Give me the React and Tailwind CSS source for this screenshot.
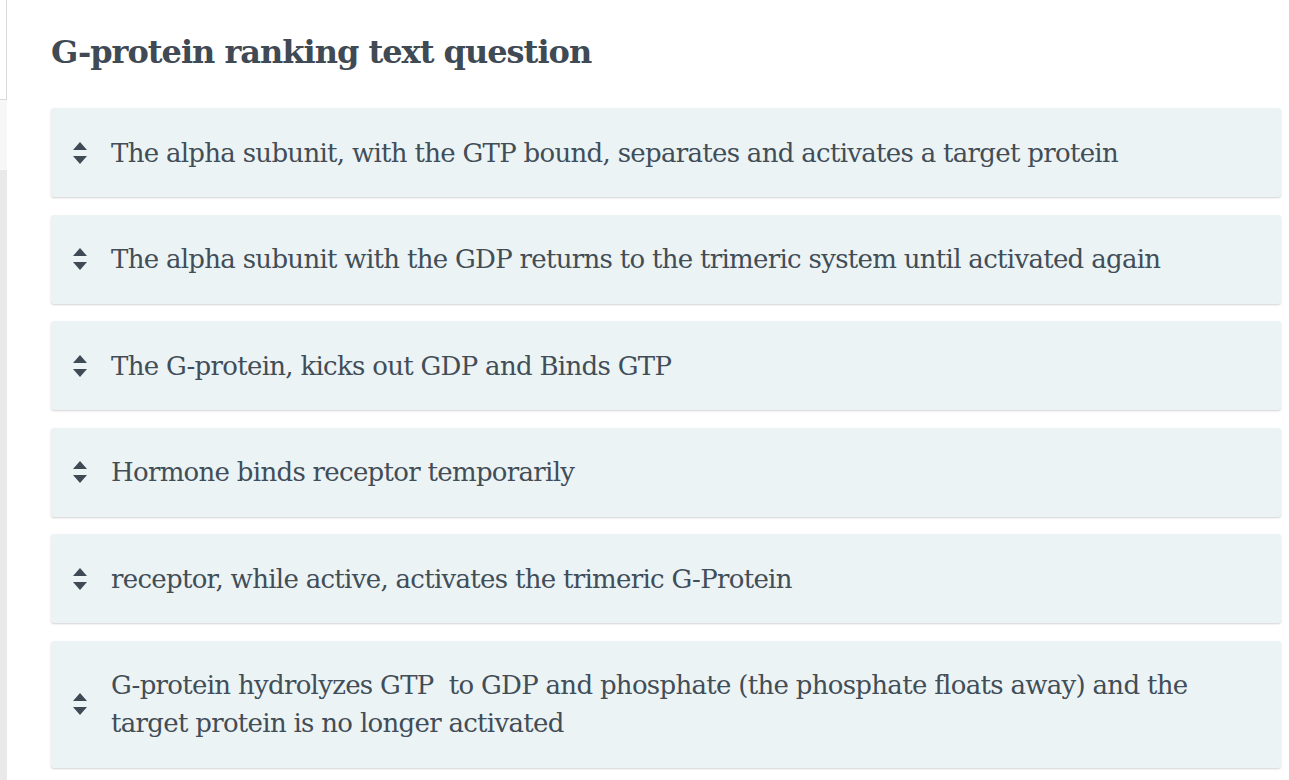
import React from 'react';

const items = [
    'The alpha subunit, with the GTP bound, separates and activates a target protein',
    'The alpha subunit with the GDP returns to the trimeric system until activated again',
    'The G-protein, kicks out GDP and Binds GTP',
    'Hormone binds receptor temporarily',
    'receptor, while active, activates the trimeric G-Protein',
    'G-protein hydrolyzes GTP\u00a0 to GDP and phosphate (the phosphate floats away) and the target protein is no longer activated',
];

function SortIcon() {
    return (
        <svg width="14" height="22" viewBox="0 0 14 22" className="shrink-0 text-[#3e4a54]">
            <path d="M0 8 L7 0 L14 8 Z" fill="currentColor" />
            <path d="M0 14 L14 14 L7 22 Z" fill="currentColor" />
        </svg>
    );
}

function RankItem({ text }) {
    return (
        <div className="flex items-center gap-[24px] bg-[#ecf3f5] rounded-[3px] shadow-[0_1px_2px_rgba(0,0,0,0.18)] pl-[22px] pr-[60px] py-[25.5px]">
            <SortIcon />
            <div className="text-[26px] leading-[38px] tracking-[-0.7px] text-[#414d57]">{text}</div>
        </div>
    );
}

export default function App() {
    return (
        <div className="flex w-[1289px] h-[780px] bg-white overflow-hidden" style={{ fontFamily: '"DejaVu Serif", "Liberation Serif", serif' }}>
            <div className="w-[7px] shrink-0 flex flex-col">
                <div className="h-[100px] bg-white border-r border-b border-[#d9d9d9]"></div>
                <div className="h-[70px] bg-[#f7f7f7]"></div>
                <div className="flex-1 bg-[#e9e9e9]"></div>
            </div>
            <div className="flex-1 pl-[44px] pr-[8px]">
                <h1 className="text-[32px] leading-[40px] font-bold text-[#3f4a54] mt-[32px] mb-[36px] tracking-[-1px]">
                    G-protein ranking text question
                </h1>
                <div className="flex flex-col gap-[17.6px]">
                    {items.map((t, i) => (
                        <RankItem key={i} text={t} />
                    ))}
                </div>
            </div>
        </div>
    );
}
